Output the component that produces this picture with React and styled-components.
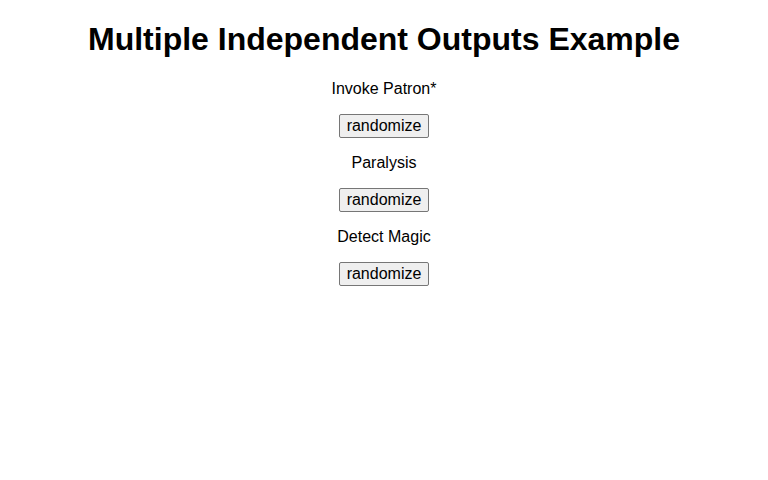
import React, { useState } from "react";
import styled, { createGlobalStyle } from "styled-components";

const Global = createGlobalStyle`
  html, body { margin: 0; padding: 0; background: #ffffff; }
  body { font-family: "Liberation Sans", Arial, sans-serif; color: #000; }
`;

const Page = styled.main`
  padding: 21.4px 8px 0;
  display: flex;
  flex-direction: column;
  align-items: center;
  text-align: center;
`;

const Title = styled.h1`
  font-size: 32px;
  font-weight: bold;
  line-height: 37px;
  margin: 0 0 22px;
`;

const Output = styled.section`
  display: flex;
  flex-direction: column;
  align-items: center;
  gap: 16px;
  margin-bottom: 16px;
`;

const Label = styled.p`
  margin: 0;
  font-size: 16px;
  line-height: 18px;
`;

const Button = styled.button`
  font-family: "Liberation Sans", Arial, sans-serif;
  font-size: 16px;
  line-height: 18px;
  height: 24px;
  padding: 1px 7px;
  background: #efefef;
  color: #000;
  border: 1px solid #767676;
  border-radius: 2px;
  cursor: pointer;
  box-sizing: border-box;
`;

const spells = [
  ["Invoke Patron*", "Magic Missile", "Charm Person", "Sleep"],
  ["Paralysis", "Blindness", "Ward Portal", "Fireball"],
  ["Detect Magic", "Feather Fall", "Invisibility", "Levitate"],
];

function OutputBlock({ options }) {
  const [value, setValue] = useState(options[0]);
  return (
    <Output>
      <Label>{value}</Label>
      <Button
        onClick={() =>
          setValue(options[Math.floor(Math.random() * options.length)])
        }
      >
        randomize
      </Button>
    </Output>
  );
}

export default function App() {
  return (
    <>
      <Global />
      <Page>
        <Title>Multiple Independent Outputs Example</Title>
        {spells.map((opts, i) => (
          <OutputBlock key={i} options={opts} />
        ))}
      </Page>
    </>
  );
}
